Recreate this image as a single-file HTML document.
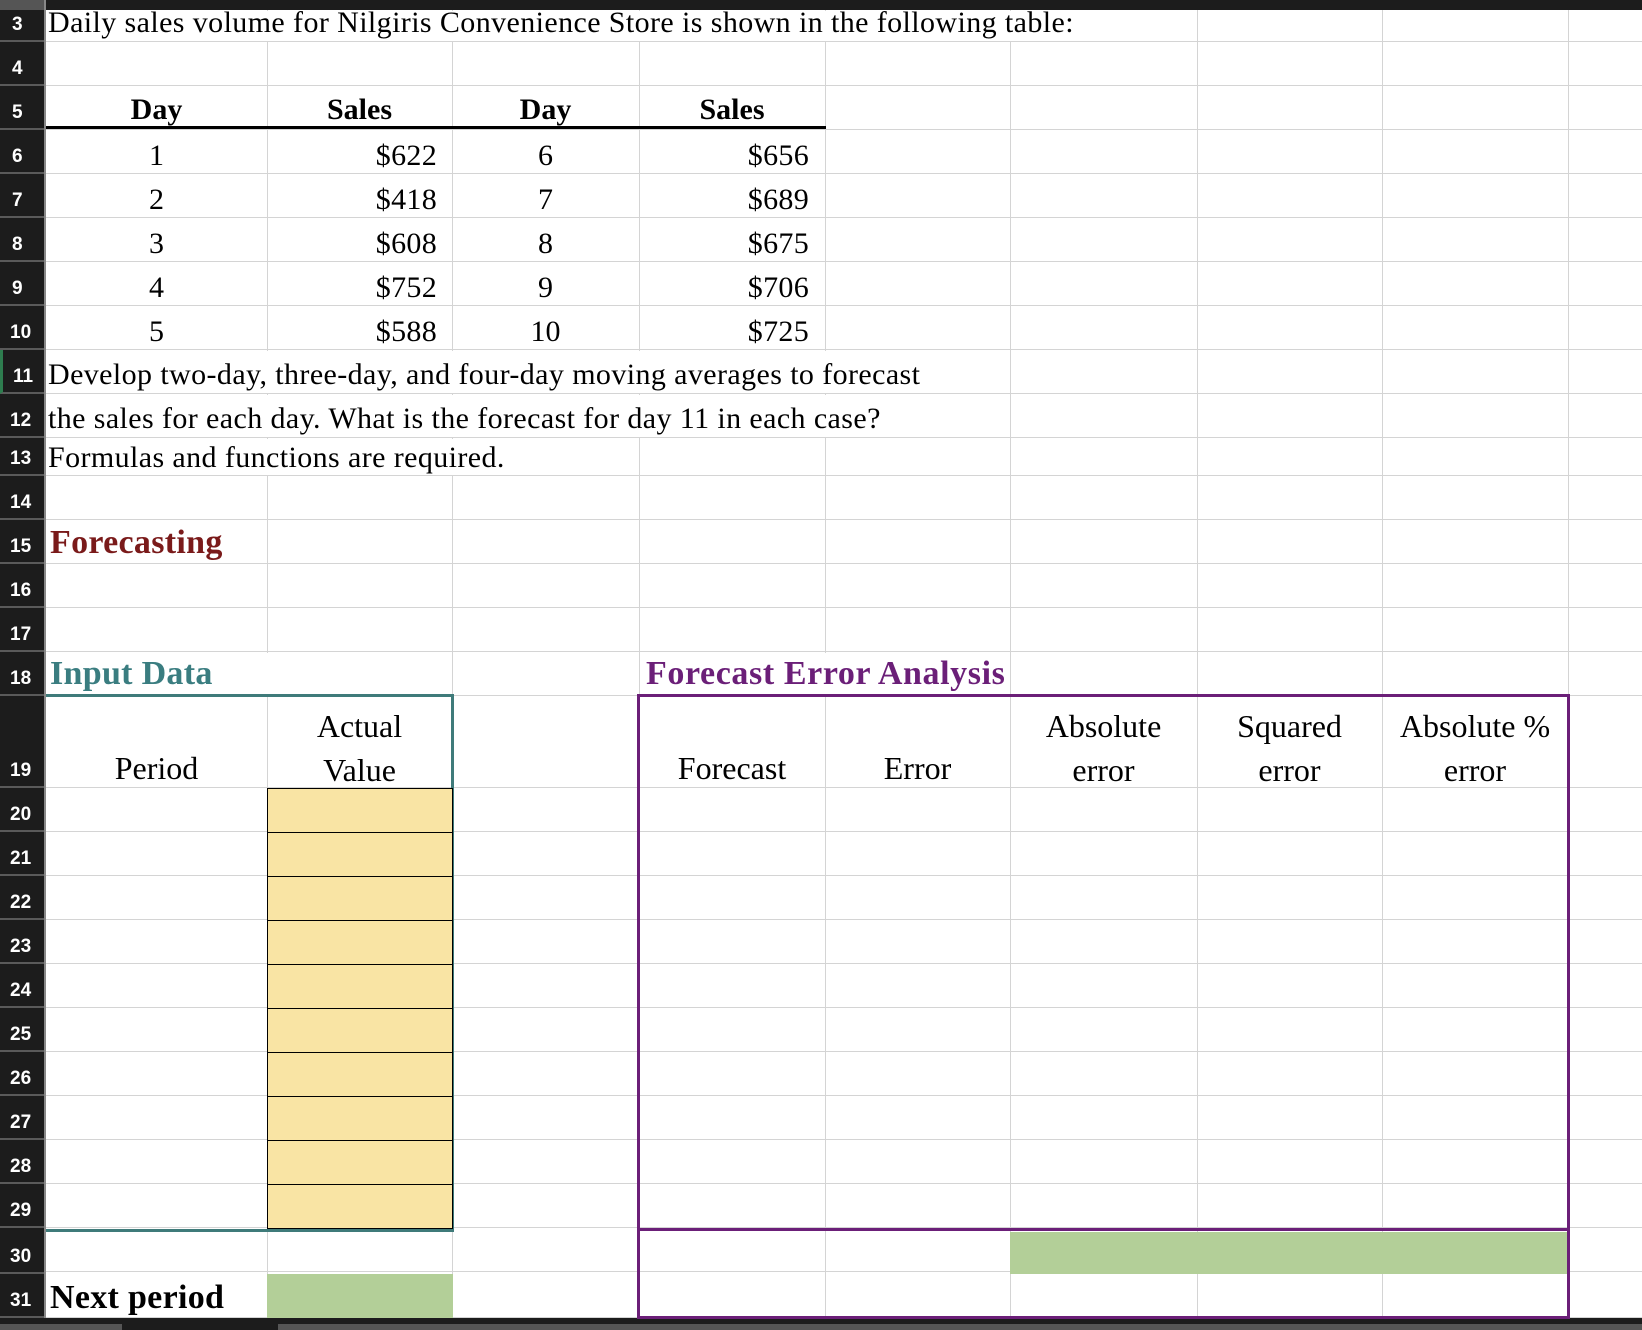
<!DOCTYPE html>
<html><head><meta charset="utf-8"><style>
*{margin:0;padding:0;box-sizing:border-box}
body{width:1642px;height:1330px;position:relative;background:#fff;overflow:hidden;font-family:"Liberation Serif",serif;color:#000}
.v{position:absolute;width:1px;background:#d4d4d4}
.h{position:absolute;height:1px;background:#d4d4d4;left:46px;right:0}
.rh{position:absolute;left:0;width:44px;background:#1c1c1c;border-bottom:2px solid #5a5a5a;color:#fff;font-family:"Liberation Sans",sans-serif;font-weight:bold;font-size:19px;display:flex;align-items:flex-end;padding:0 0 4px 12px}
.t{position:absolute;font-size:30px;letter-spacing:0.4px;line-height:32px;white-space:nowrap}
.c{position:absolute;font-size:30px;line-height:32px;white-space:nowrap;text-align:center}
.r{position:absolute;font-size:30px;line-height:32px;white-space:nowrap;text-align:right;letter-spacing:0.3px}
b{font-weight:bold}
.y{position:absolute;left:267px;width:186px;height:45px;background:#f9e4a4;border:1.5px solid #000}
</style></head><body>
<div style="position:absolute;left:0;top:0;width:1642px;height:10px;background:#1c1c1c"></div>
<div style="position:absolute;left:0;top:0;width:44px;height:10px;background:#555"></div>
<div style="position:absolute;left:44px;top:0;width:2px;height:1330px;background:#888"></div>

<div class="v" style="left:267px;top:10px;height:1310px"></div>
<div class="v" style="left:452px;top:10px;height:1310px"></div>
<div class="v" style="left:639px;top:10px;height:1310px"></div>
<div class="v" style="left:825px;top:10px;height:1310px"></div>
<div class="v" style="left:1010px;top:10px;height:1310px"></div>
<div class="v" style="left:1197px;top:10px;height:1310px"></div>
<div class="v" style="left:1382px;top:10px;height:1310px"></div>
<div class="v" style="left:1568px;top:10px;height:1310px"></div>

<div style="position:absolute;left:46px;top:11px;width:1150px;height:30px;background:#fff"></div>
<div style="position:absolute;left:46px;top:351px;width:963px;height:43px;background:#fff"></div>
<div style="position:absolute;left:46px;top:395px;width:963px;height:43px;background:#fff"></div>
<div style="position:absolute;left:46px;top:439px;width:592px;height:37px;background:#fff"></div>
<div style="position:absolute;left:46px;top:653px;width:405px;height:43px;background:#fff"></div>
<div style="position:absolute;left:640px;top:653px;width:369px;height:43px;background:#fff"></div>

<div class="h" style="top:41px"></div><div class="h" style="top:85px"></div><div class="h" style="top:129px"></div>
<div class="h" style="top:173px"></div><div class="h" style="top:217px"></div><div class="h" style="top:261px"></div>
<div class="h" style="top:305px"></div><div class="h" style="top:349px"></div><div class="h" style="top:393px"></div>
<div class="h" style="top:437px"></div><div class="h" style="top:475px"></div><div class="h" style="top:519px"></div>
<div class="h" style="top:563px"></div><div class="h" style="top:607px"></div><div class="h" style="top:651px"></div>
<div class="h" style="top:695px"></div><div class="h" style="top:787px"></div><div class="h" style="top:831px"></div>
<div class="h" style="top:875px"></div><div class="h" style="top:919px"></div><div class="h" style="top:963px"></div>
<div class="h" style="top:1007px"></div><div class="h" style="top:1051px"></div><div class="h" style="top:1095px"></div>
<div class="h" style="top:1139px"></div><div class="h" style="top:1183px"></div><div class="h" style="top:1227px"></div>
<div class="h" style="top:1271px"></div><div class="h" style="top:1317px"></div>

<div class="rh" style="top:10px;height:32px">3</div>
<div class="rh" style="top:42px;height:44px">4</div>
<div class="rh" style="top:86px;height:44px">5</div>
<div class="rh" style="top:130px;height:44px">6</div>
<div class="rh" style="top:174px;height:44px">7</div>
<div class="rh" style="top:218px;height:44px">8</div>
<div class="rh" style="top:262px;height:44px">9</div>
<div class="rh" style="top:306px;height:44px;padding-left:10px">10</div>
<div class="rh" style="top:350px;height:44px;padding-left:10px;border-left:3px solid #2e7d4f">11</div>
<div class="rh" style="top:394px;height:44px;padding-left:10px">12</div>
<div class="rh" style="top:438px;height:38px;padding-left:10px">13</div>
<div class="rh" style="top:476px;height:44px;padding-left:10px">14</div>
<div class="rh" style="top:520px;height:44px;padding-left:10px">15</div>
<div class="rh" style="top:564px;height:44px;padding-left:10px">16</div>
<div class="rh" style="top:608px;height:44px;padding-left:10px">17</div>
<div class="rh" style="top:652px;height:44px;padding-left:10px">18</div>
<div class="rh" style="top:696px;height:92px;padding-left:10px">19</div>
<div class="rh" style="top:788px;height:44px;padding-left:10px">20</div>
<div class="rh" style="top:832px;height:44px;padding-left:10px">21</div>
<div class="rh" style="top:876px;height:44px;padding-left:10px">22</div>
<div class="rh" style="top:920px;height:44px;padding-left:10px">23</div>
<div class="rh" style="top:964px;height:44px;padding-left:10px">24</div>
<div class="rh" style="top:1008px;height:44px;padding-left:10px">25</div>
<div class="rh" style="top:1052px;height:44px;padding-left:10px">26</div>
<div class="rh" style="top:1096px;height:44px;padding-left:10px">27</div>
<div class="rh" style="top:1140px;height:44px;padding-left:10px">28</div>
<div class="rh" style="top:1184px;height:44px;padding-left:10px">29</div>
<div class="rh" style="top:1228px;height:46px;padding-left:10px">30</div>
<div class="rh" style="top:1274px;height:44px;padding-left:10px">31</div>
<div style="position:absolute;left:0;top:1318px;width:1642px;height:12px;background:#1c1c1c"></div>
<div style="position:absolute;left:0;top:1324px;width:122px;height:6px;background:#555"></div>
<div style="position:absolute;left:278px;top:1324px;width:1364px;height:6px;background:#555"></div>

<div class="t" style="left:48px;top:7px">Daily sales volume for Nilgiris Convenience Store is shown in the following table:</div>

<div class="c" style="left:46px;width:221px;top:94px"><b>Day</b></div>
<div class="c" style="left:267px;width:185px;top:94px"><b>Sales</b></div>
<div class="c" style="left:452px;width:187px;top:94px"><b>Day</b></div>
<div class="c" style="left:639px;width:186px;top:94px"><b>Sales</b></div>
<div style="position:absolute;left:46px;top:126px;width:780px;height:3px;background:#000"></div>

<div class="c" style="left:46px;width:221px;top:140px">1</div>
<div class="r" style="left:267px;width:170px;top:140px">$622</div>
<div class="c" style="left:452px;width:187px;top:140px">6</div>
<div class="r" style="left:639px;width:170px;top:140px">$656</div>
<div class="c" style="left:46px;width:221px;top:184px">2</div>
<div class="r" style="left:267px;width:170px;top:184px">$418</div>
<div class="c" style="left:452px;width:187px;top:184px">7</div>
<div class="r" style="left:639px;width:170px;top:184px">$689</div>
<div class="c" style="left:46px;width:221px;top:228px">3</div>
<div class="r" style="left:267px;width:170px;top:228px">$608</div>
<div class="c" style="left:452px;width:187px;top:228px">8</div>
<div class="r" style="left:639px;width:170px;top:228px">$675</div>
<div class="c" style="left:46px;width:221px;top:272px">4</div>
<div class="r" style="left:267px;width:170px;top:272px">$752</div>
<div class="c" style="left:452px;width:187px;top:272px">9</div>
<div class="r" style="left:639px;width:170px;top:272px">$706</div>
<div class="c" style="left:46px;width:221px;top:316px">5</div>
<div class="r" style="left:267px;width:170px;top:316px">$588</div>
<div class="c" style="left:452px;width:187px;top:316px">10</div>
<div class="r" style="left:639px;width:170px;top:316px">$725</div>

<div class="t" style="left:48px;top:359px">Develop two-day, three-day, and four-day moving averages to forecast</div>
<div class="t" style="left:48px;top:403px">the sales for each day. What is the forecast for day 11 in each case?</div>
<div class="t" style="left:48px;top:442px">Formulas and functions are required.</div>

<div class="t" style="left:50px;top:525px;font-size:34px;line-height:36px;letter-spacing:0.3px;font-weight:bold;color:#7a1a1a">Forecasting</div>
<div class="t" style="left:50px;top:656px;font-size:34px;line-height:36px;letter-spacing:0.3px;font-weight:bold;color:#3a7d80">Input Data</div>
<div class="t" style="left:646px;top:656px;font-size:34px;line-height:36px;letter-spacing:0.6px;font-weight:bold;color:#6b1f78">Forecast Error Analysis</div>

<div style="position:absolute;left:46px;top:694px;width:408px;height:3px;background:#3f7b7a"></div>
<div style="position:absolute;left:451px;top:694px;width:3px;height:538px;background:#3f7b7a"></div>
<div style="position:absolute;left:46px;top:1229px;width:408px;height:3px;background:#3f7b7a"></div>

<div class="c" style="left:46px;width:221px;top:752px;font-size:32px">Period</div>
<div class="c" style="left:267px;width:185px;top:704px;font-size:32px;line-height:44px">Actual<br>Value</div>

<div class="y" style="top:788px"></div><div class="y" style="top:832px"></div><div class="y" style="top:876px"></div>
<div class="y" style="top:920px"></div><div class="y" style="top:964px"></div><div class="y" style="top:1008px"></div>
<div class="y" style="top:1052px"></div><div class="y" style="top:1096px"></div><div class="y" style="top:1140px"></div>
<div class="y" style="top:1184px;height:45px"></div>

<div style="position:absolute;left:267px;top:1274px;width:186px;height:44px;background:#b3cf98"></div>
<div class="t" style="left:50px;top:1280px;font-size:34px;line-height:36px;letter-spacing:0.3px;font-weight:bold">Next period</div>

<div style="position:absolute;left:1010px;top:1232px;width:557px;height:42px;background:#b3cf98"></div>
<div style="position:absolute;left:637px;top:694px;width:933px;height:625px;border:3px solid #6b1f78"></div>
<div style="position:absolute;left:637px;top:1228px;width:933px;height:3px;background:#6b1f78"></div>

<div class="c" style="left:639px;width:186px;top:752px;font-size:32px">Forecast</div>
<div class="c" style="left:825px;width:185px;top:752px;font-size:32px">Error</div>
<div class="c" style="left:1010px;width:187px;top:704px;font-size:32px;line-height:44px">Absolute<br>error</div>
<div class="c" style="left:1197px;width:185px;top:704px;font-size:32px;line-height:44px">Squared<br>error</div>
<div class="c" style="left:1382px;width:186px;top:704px;font-size:32px;line-height:44px">Absolute %<br>error</div>
</body></html>
